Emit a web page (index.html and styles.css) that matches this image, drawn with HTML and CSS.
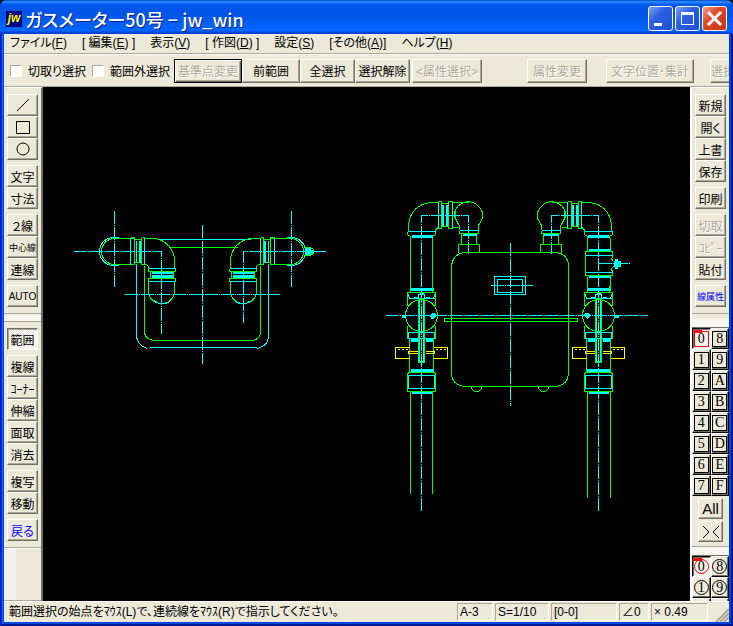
FILE: index.html
```html
<!DOCTYPE html>
<html lang="ja">
<head>
  <meta charset="UTF-8" />
  <title>ガスメーター50号 − jw_win</title>
  <link rel="stylesheet" href="styles.css">
</head>
<body>

<div class="window">
  <header class="titlebar">
    <span class="app-icon">jw</span>
    <h1>ガスメーター50号 − jw_win</h1>
    <div class="window-buttons">
      <button aria-label="最小化"><svg viewBox="0 0 23 23"><path d="M5 16h8v3H5z" fill="#fff"/></svg></button>
      <button aria-label="最大化"><svg viewBox="0 0 23 23"><path d="M5 5h13v13H5zM6 8v9h11V8z" fill="#fff" fill-rule="evenodd"/></svg></button>
      <button class="close" aria-label="閉じる"><svg viewBox="0 0 23 23"><path d="M6 6l11 11M17 6L6 17" stroke="#fff" stroke-width="3" stroke-linecap="square"/></svg></button>
    </div>
  </header>

  <nav class="menubar">
    <a href="#">ファイル(<u>F</u>)</a>
    <a href="#">[ 編集(<u>E</u>) ]</a>
    <a href="#">表示(<u>V</u>)</a>
    <a href="#">[ 作図(<u>D</u>) ]</a>
    <a href="#">設定(<u>S</u>)</a>
    <a href="#">[その他(<u>A</u>)]</a>
    <a href="#">ヘルプ(<u>H</u>)</a>
  </nav>

  <div class="controlbar">
    <label for="cutSelect"><input type="checkbox" id="cutSelect" />切取り選択</label>
    <label for="outSelect"><input type="checkbox" id="outSelect" />範囲外選択</label>
    <button class="w-base default" disabled>基準点変更</button>
    <button class="w-mid">前範囲</button>
    <button class="w-short">全選択</button>
    <button class="w-short">選択解除</button>
    <button class="w-attr" disabled>&lt;属性選択&gt;</button>
    <button class="w-change" disabled>属性変更</button>
    <button class="w-long" disabled>文字位置･集計</button>
    <button class="w-end" disabled>選択</button>
  </div>

  <main class="workspace">
    <aside class="tools left">
      <div class="panel">
        <div class="group">
          <button aria-label="線"><svg viewBox="0 0 16 16"><path d="M2 14L14 2"/></svg></button>
          <button aria-label="矩形"><svg viewBox="0 0 16 16"><path d="M1.500 2.500h13v12h-13z"/></svg></button>
          <button aria-label="円"><svg viewBox="0 0 16 16"><circle cx="8" cy="8" r="6"/></svg></button>
        </div>
        <div class="group">
          <button>文字</button>
          <button>寸法</button>
        </div>
        <div class="group">
          <button>２線</button>
          <button class="narrow">中心線</button>
          <button>連線</button>
        </div>
        <div class="group">
          <button class="latin">AUTO</button>
        </div>
      </div>
      <div class="panel">
        <div class="group">
          <button class="pressed">範囲</button>
        </div>
        <div class="group">
          <button>複線</button>
          <button>ｺｰﾅｰ</button>
          <button>伸縮</button>
          <button>面取</button>
          <button>消去</button>
        </div>
        <div class="group">
          <button>複写</button>
          <button>移動</button>
        </div>
        <div class="group">
          <button class="blue">戻る</button>
        </div>
      </div>
      <div class="rest"></div>
    </aside>

    <div class="canvas">
      <svg viewBox="43 88 647 513" role="img" aria-label="ガスメーター50号">
        <defs>
          <!-- elbow of the plan view -->
          <g id="planElbow">
            <path class="g" d="M114 238H134M114 264H134M114 238A13 13 0 0 0 114 264M130 237H134V264H130M134 239H141M134 262H141M134 239V262M141 237H144M141 264H144M141 237V264"/>
            <path class="c" d="M118 237H113A14 14 0 0 0 113 265H118M130 237V264M136 240V262M139 240V262M140 240V262M144 237V264"/>
            <path class="g" d="M144 238H153C166 239 174 250 174 260V268M144 264H146Q148 265 148 268M148 268V271H175V268M150 271V278M173 271V278M148 281V278H175V281M148 281V291A13 12 0 0 0 174 291V281"/>
            <path class="c" d="M148 268H175M148 281H175M151 272H172M151 273H172M151 275H172M151 276H172M151 277H172M154 300L158 303H166L169 301"/>
          </g>
          <!-- riser of the front view: elbow, globe joint, valve, union -->
          <g id="riser">
            <path class="g" d="M408 231V225C409 211 418 203 431 202H438M435 231Q435 228 438 227M438 201H441V228H438M441 203H448V226H441M452 201H448V228H452M452 202H468M452 227H458"/>
            <path class="c" d="M438 201V228M452 201V228M442 204V225M443 204V225M446 204V225M447 204V225"/>
            <path class="g" d="M459 229V225L455 219V209Q459 202 468 201Q478 202 482 212V218L478 225V229M459 230V233H478V230M461 233V244M476 233V244M458 252V244H479V252M458 224L454 216V210"/>
            <path class="c" d="M459 230H478M462 234H476M462 235H476M407 231H435"/>
            <path class="g" d="M407 231V234L410 236V237M435 231V234L432 236V237"/>
            <path class="c" d="M411 235H432M411 236H432M411 237H432M409 288H433M409 289H433M409 290H433"/>
            <path class="g" d="M410 285V291M432 285V291M407 305V292H435V305M407 325V338H435V325M409 338V371M433 338V371M407 373V391H435V373L433 372H409Z"/>
            <circle class="g" cx="421" cy="315" r="16"/>
            <path class="c" d="M408 298H434M408 293V296L410 298M434 293V296L432 298M413 297H417M425 297H429M408 332H434V338H408ZM410 339H417M410 340H417M410 341H417M425 339H432M425 340H432M425 341H432M410 369H433M410 370H433M410 371H433M408 375H434V388H408ZM411 392H431M411 393H431"/>
            <path class="y" d="M409 347H395V358H409M433 347H447V358H433M417 351H408V353H417M425 351H434V353H425"/>
            <path class="y dash" d="M397 349H409M435 349H447"/>
            <path class="g" d="M418 298V362H424V298Z"/>
            <path class="c" d="M419 299V361H423V299M418 298V294H424V298M419 293H423"/>
            <path class="fill" d="M429 315L432 312H434L436 315L433 318H431ZM401 314H405V317H401Z"/>
          </g>
        </defs>
        <g transform="translate(.5 .5)">
          <!-- plan view -->
          <path class="c" d="M156 239H250M136 263V336Q137 345 147 348M149 347H256M257 348Q268 345 268 336V263"/>
          <path class="g" d="M168 247H237M144 265V333Q146 339 153 340H251Q259 339 260 333V265"/>
          <use href="#planElbow"/>
          <use href="#planElbow" transform="translate(404 0) scale(-1 1)"/>
          <path class="fill" d="M304 247H310V249H313V253H310V255H304Z"/>
          <path class="g" d="M304 247H310L313 249V253L309 255H304"/>
          <path class="c axis" d="M73 251H161V333M325 251H243V322M114 210V286M291 210V286M202 224V363M124 294H279"/>

          <!-- meter body -->
          <path class="g" d="M463 252H556Q568 254 568 266V374Q567 384 556 386H463Q452 384 451 374V266Q452 254 463 252ZM471 387Q472 391 476 391Q480 391 481 387M538 387Q539 391 543 391Q547 391 548 387M444 318H577V321H444Z"/>
          <path class="c" d="M494 276H525V294H494ZM497 279H522V292H497Z"/>
          <path class="c axis" d="M490 285H532M510 242V405"/>

          <!-- left and right pipes -->
          <use href="#riser"/>
          <use href="#riser" transform="translate(1019 0) scale(-1 1)"/>
          <path class="g" d="M410 237V285M432 237V285M410 391V493M432 391V493M587 391V497M610 391V497"/>
          <path class="g" d="M587 237V250M610 237V250M611 259L612 256V251H585V275H612V272L611 268M587 276V287M610 276V287"/>
          <path class="c" d="M588 249H610M588 250H610M585 255H612M585 272H612M588 276H610M588 277H610"/>
          <path class="fill" d="M613 260H614V258H617V260H620V266H617V268H614V266H613Z"/>
          <path class="g" d="M611 259L613 260M611 268L613 266M619 261V265"/>
          <path class="c axis" d="M421 510V215H468V253M598 510V215H551V253M385 315H647M598 263H629"/>
        </g>
      </svg>
    </div>

    <aside class="tools right">
      <div class="panel">
        <div class="group">
          <button>新規</button>
          <button>開く</button>
          <button>上書</button>
          <button>保存</button>
        </div>
        <div class="group">
          <button>印刷</button>
        </div>
        <div class="group">
          <button disabled>切取</button>
          <button disabled>ｺﾋﾟｰ</button>
          <button>貼付</button>
        </div>
        <div class="group">
          <button class="blue narrow">線属性</button>
        </div>
      </div>
      <div class="layers">
        <button class="current"><span>0</span></button><button><span>8</span></button>
        <button><span>1</span></button><button><span>9</span></button>
        <button><span>2</span></button><button><span>A</span></button>
        <button><span>3</span></button><button><span>B</span></button>
        <button><span>4</span></button><button><span>C</span></button>
        <button><span>5</span></button><button><span>D</span></button>
        <button><span>6</span></button><button><span>E</span></button>
        <button><span>7</span></button><button><span>F</span></button>
      </div>
      <div class="layer-all">
        <button>All</button>
        <button aria-label="切替"><svg viewBox="0 0 16 16"><path d="M0 2l6 6-6 6M16 2l-6 6 6 6"/></svg></button>
      </div>
      <div class="layers round">
        <button class="current"><span>0</span></button><button><span>8</span></button>
        <button><span>1</span></button><button><span>9</span></button>
        <button aria-label="2"><span></span></button><button aria-label="A"><span></span></button>
      </div>
    </aside>
  </main>

  <footer class="statusbar">
    <p>範囲選択の始点をﾏｳｽ(L)で、連続線をﾏｳｽ(R)で指示してください。</p>
    <button class="s-paper">A-3</button>
    <button class="s-scale">S=1/10</button>
    <button class="s-layer">[0-0]</button>
    <button class="s-angle">∠0</button>
    <button class="s-zoom">× 0.49</button>
    <svg class="grip" viewBox="0 0 14 14"><path d="M1 14L14 1M5 14l9-9M9 14l5-5" stroke="#aca899" stroke-width="2"/></svg>
  </footer>
</div>

</body>
</html>
```
FILE: styles.css
```css
* {
  box-sizing: border-box;
}

body {
  margin: 0;
  background-color: #101828;
  font-family: "Liberation Sans", "Noto Sans CJK JP", sans-serif;
  font-size: 12px;
  font-feature-settings: "palt";
  color: #000;
}

.window {
  display: flex;
  flex-direction: column;
  height: 100vh;
  padding: 0 4px 4px;
  overflow: hidden;
  background-color: #0046e0;
  border-radius: 7px 7px 0 0;
  box-shadow: inset 1px 0 #0019cf, inset -1px -1px #00138c, inset 2px 0 #0831d9, inset -2px -2px #001ea0, inset 3px 0 #166aee;
}

button {
  font: inherit;
  color: inherit;
  padding: 0;
  white-space: nowrap;
  overflow: hidden;
  background-color: #ece9d8;
  border: 1px solid;
  border-color: #fff #716f64 #716f64 #fff;
  box-shadow: inset -1px -1px #aca899;
}

button:disabled {
  color: #aca899;
  text-shadow: 1px 1px #fff;
}

/* title */
.titlebar {
  display: flex;
  align-items: center;
  flex: none;
  height: 34px;
  margin: 0 -4px;
  padding: 3px 6px 0;
  background: linear-gradient(180deg, #0042c8, #2a8cff 5%, #0058ee 14%, #0053e4 40%, #0062fb 75%, #0066ff 90%, #003dd7 97%);
}

.titlebar h1 {
  flex: 1;
  margin: 0 0 0 3px;
  font-family: "Noto Sans CJK JP", sans-serif;
  font-size: 18px;
  line-height: 28px;
  font-weight: 500;
  color: #fff;
  text-shadow: 1px 1px #0a1e8c;
}

.app-icon {
  width: 16px;
  height: 16px;
  background-color: #000080;
  color: #ff0;
  font-size: 12px;
  font-weight: bold;
  font-style: italic;
  line-height: 14px;
  text-align: center;
}

.window-buttons {
  display: flex;
  gap: 2px;
}

.window-buttons button {
  width: 25px;
  height: 25px;
  border: 1px solid #fff;
  border-radius: 3px;
  background: linear-gradient(135deg, #7ba2f5, #2b5fe4 40%, #1f50d2);
  box-shadow: none;
}

.window-buttons .close {
  background: linear-gradient(135deg, #f0a088, #e0492a 40%, #c83410);
}

.window-buttons svg {
  display: block;
}

/* menu */
.menubar {
  display: flex;
  flex: none;
  gap: 15px;
  height: 20px;
  padding: 0 6px;
  line-height: 18px;
  background-color: #ece9d8;
  border-bottom: 1px solid #aca899;
}

.menubar a {
  color: #000;
  text-decoration: none;
  white-space: nowrap;
}

.controlbar {
  display: flex;
  align-items: center;
  flex: none;
  height: 33px;
  padding-left: 6px;
  overflow: hidden;
  background-color: #ece9d8;
  border-top: 1px solid #fff;
  border-bottom: 1px solid #aca899;
}

.controlbar label {
  display: flex;
  align-items: center;
  flex: none;
  gap: 6px;
  width: 82px;
  white-space: nowrap;
}

.controlbar input {
  appearance: none;
  width: 12px;
  height: 12px;
  margin: 0;
  background-color: #fff;
  border: 1px solid;
  border-color: #aca899 #fff #fff #aca899;
}

.controlbar button {
  flex: none;
  height: 24px;
}

.controlbar .default {
  border-color: #000;
  box-shadow: inset 1px 1px #fff, inset -1px -1px #716f64, inset -2px -2px #aca899;
}

.controlbar .w-base { width: 68px; }
.controlbar .w-mid { width: 58px; }
.controlbar .w-short { width: 55px; }
.controlbar .w-attr { width: 70px; margin-left: 2px; }
.controlbar .w-change { width: 60px; margin-left: 45px; }
.controlbar .w-long { width: 88px; margin-left: 19px; }
.controlbar .w-end { width: 60px; margin-left: 16px; text-align: left; }

/* work area */
.workspace {
  display: flex;
  flex: 1;
  min-height: 0;
  background-color: #ece9d8;
}

.canvas {
  flex: 1;
  min-width: 0;
  background-color: #000;
  border-top: 1px solid #000;
}

.canvas svg {
  display: block;
  width: 100%;
  height: 100%;
  fill: none;
  shape-rendering: crispEdges;
}

.g { stroke: #0f0; }
.c { stroke: #0ff; }
.y { stroke: #ff0; }
.fill { fill: #0ff; }
.axis { stroke-dasharray: 13 1 1 1; }
.dash { stroke-dasharray: 2 2; }

.tools {
  display: flex;
  flex-direction: column;
  flex: none;
  overflow: hidden;
  border-top: 1px solid #fff;
}

.left {
  width: 39px;
  border-right: 2px solid #716f64;
}

.right {
  width: 39px;
  border-left: 2px solid #fff;
}

.panel {
  display: flex;
  flex-direction: column;
  flex: none;
  gap: 5px;
  padding: 6px 3px;
  border-bottom: 1px solid #aca899;
}

.panel + .panel {
  margin-top: 7px;
  border-top: 1px solid #aca899;
  box-shadow: 0 -6px #f6f5ee;
}

.group {
  display: flex;
  flex-direction: column;
}

.panel button {
  width: 31px;
  height: 22px;
}

.panel svg,
.layer-all svg {
  display: block;
  width: 16px;
  margin: 0 auto;
  fill: none;
  stroke: #000;
}

.panel .narrow {
  font-size: 9px;
}

.panel .latin {
  font-size: 10px;
}

.panel .blue {
  color: #00f;
}

.panel .pressed {
  background: repeating-conic-gradient(#fff 0 25%, #ece9d8 0 50%) 0 0 / 2px 2px;
  border-color: #716f64 #fff #fff #716f64;
  box-shadow: inset 1px 1px #aca899;
}

.rest {
  flex: 1;
  background: linear-gradient(90deg, #f1f0ea 12px, #ece9d8 12px);
  border-top: 1px solid #fff;
  border-bottom: 1px solid #aca899;
}

.layers {
  display: grid;
  grid-template-columns: 1fr 1fr;
  grid-auto-rows: 21px;
  flex: none;
  margin-top: 13px;
  border-top: 1px solid #716f64;
  box-shadow: 0 -8px #f6f5ee;
}

.layers button {
  display: flex;
  align-items: center;
  justify-content: center;
  border-color: #fff #000 #000 #fff;
  box-shadow: inset -1px -1px #716f64;
}

.layers span {
  position: relative;
  width: 15px;
  height: 16px;
  border: 1px solid #000;
  font-family: "Liberation Serif", serif;
  font-size: 14px;
  line-height: 14px;
}

.layers .current {
  overflow: visible;
  background: repeating-conic-gradient(#fff 0 25%, #ece9d8 0 50%) 0 0 / 2px 2px;
  border-color: #000 #fff #fff #000;
  box-shadow: inset 1px 1px #716f64;
}

.layers .current span {
  border-color: #f00;
}

/* tab on the layer being written */
.layers .current span::before {
  content: "";
  position: absolute;
  top: -2px;
  left: -1px;
  width: 8px;
  height: 3px;
  background-color: #f00;
}

.round {
  margin-top: 8px;
}

.round span {
  height: 15px;
  border-radius: 50%;
  line-height: 13px;
}

.layer-all {
  display: flex;
  flex-direction: column;
  align-items: center;
  flex: none;
  gap: 2px;
  padding: 2px 0 4px;
  border-bottom: 1px solid #aca899;
}

.layer-all button {
  width: 25px;
  height: 21px;
  font-size: 15px;
  line-height: 18px;
}

/* status */
.statusbar {
  display: flex;
  align-items: center;
  flex: none;
  gap: 2px;
  height: 21px;
  background-color: #ece9d8;
  border-top: 1px solid #fff;
}

.statusbar p {
  flex: 1;
  margin: 0;
  padding-left: 5px;
  line-height: 18px;
  white-space: nowrap;
}

.statusbar button {
  height: 18px;
  padding-left: 2px;
  line-height: 16px;
  text-align: left;
  border-color: #aca899 #fff #fff #aca899;
  box-shadow: none;
}

.s-paper { width: 36px; }
.s-scale { width: 54px; }
.s-layer { width: 66px; }
.s-angle { width: 30px; }
.s-zoom { width: 57px; }

.grip {
  width: 14px;
  height: 14px;
  margin-left: 5px;
  align-self: flex-end;
}
```
